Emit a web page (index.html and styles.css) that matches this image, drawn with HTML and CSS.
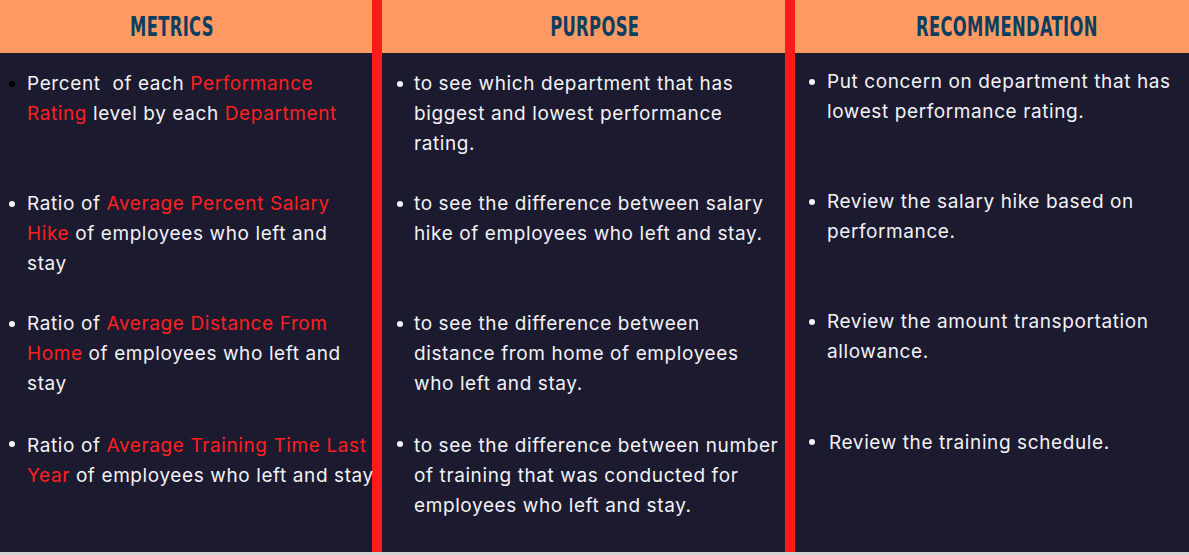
FILE: index.html
```html
<!DOCTYPE html>
<html>
<head>
<meta charset="utf-8">
<link rel="stylesheet" href="styles.css">
</head>
<body>
<div class="board">
  <section class="col col-metrics">
    <header class="head"><span>METRICS</span></header>
    <ul class="items">
      <li class="dark-dot">Percent&nbsp; of each <em>Performance</em><br><em>Rating</em> level by each <em>Department</em></li>
      <li>Ratio of <em>Average Percent Salary</em><br><em>Hike</em> of employees who left and<br>stay</li>
      <li>Ratio of <em>Average Distance From</em><br><em>Home</em> of employees who left and<br>stay</li>
      <li class="last">Ratio of <em>Average Training Time Last</em><br><em>Year</em> of employees who left and stay</li>
    </ul>
  </section>
  <section class="col col-purpose">
    <header class="head"><span>PURPOSE</span></header>
    <ul class="items">
      <li>to see which department that has<br>biggest and lowest performance<br>rating.</li>
      <li>to see the difference between salary<br>hike of employees who left and stay.</li>
      <li>to see the difference between<br>distance from home of employees<br>who left and stay.</li>
      <li class="last">to see the difference between number<br>of training that was conducted for<br>employees who left and stay.</li>
    </ul>
  </section>
  <section class="col col-reco">
    <header class="head"><span>RECOMMENDATION</span></header>
    <ul class="items">
      <li>Put concern on department that has<br>lowest performance rating.</li>
      <li>Review the salary hike based on<br>performance.</li>
      <li>Review the amount transportation<br>allowance.</li>
      <li class="last shift">Review the training schedule.</li>
    </ul>
  </section>
</div>
</body>
</html>
```
FILE: styles.css
```css
html, body {
  margin: 0;
  padding: 0;
}
body {
  background: #d4d4d6;
  width: 1189px;
  height: 555px;
  overflow: hidden;
}
.board {
  display: grid;
  grid-template-columns: 372px 413px 404px;
  height: 552px;
  background: #1c1a2f;
}
.col {
  display: flex;
  flex-direction: column;
  min-width: 0;
}
.col-purpose, .col-reco {
  border-left: 10px solid #ff1a1a;
}
.head {
  height: 53px;
  background: #ff9a63;
  display: flex;
  align-items: center;
  justify-content: center;
}
.head span {
  font-family: "Liberation Sans Narrow", "DejaVu Sans Condensed", sans-serif;
  font-weight: 700;
  font-size: 26px;
  color: #0b3e5f;
  letter-spacing: 0.5px;
  display: inline-block;
  transform: scaleX(0.7);
}
.col-metrics .head { padding-right: 28px; }
.col-purpose .head { padding-left: 22px; }
.col-reco .head { padding-left: 30px; }
.items {
  list-style: none;
  margin: 0;
  padding: 16px 0 0 0;
  font-family: "Inter", "DejaVu Sans", sans-serif;
  font-size: 19px;
  letter-spacing: 0.6px;
  line-height: 30px;
  color: #f2f2f7;
}
.items li {
  height: 120px;
  position: relative;
  white-space: nowrap;
}
.items li::before {
  content: "";
  position: absolute;
  width: 6px;
  height: 6px;
  border-radius: 50%;
  background: #f4f4f8;
  top: 12px;
}
.items li.dark-dot::before { background: #000; }
.items li.last { padding-top: 2px; }
.items em {
  font-style: normal;
  color: #ff1f1f;
}
.col-metrics li { padding-left: 27px; }
.col-metrics li::before { left: 9px; }
.col-purpose li { padding-left: 32px; }
.col-purpose li::before { left: 15px; }
.col-reco .items { padding-top: 14px; }
.col-reco li { padding-left: 32px; }
.col-reco li::before { left: 14px; }
.col-reco li.shift { padding-left: 34px; padding-top: 1px; }
```
